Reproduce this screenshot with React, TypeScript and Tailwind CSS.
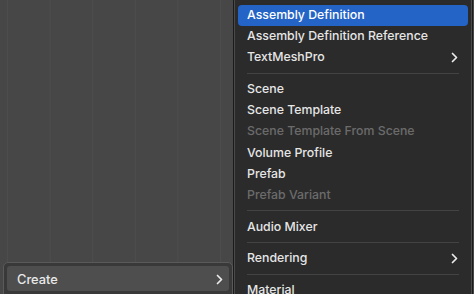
import React from "react";

type Item =
  | { kind: "item"; label: string; disabled?: boolean; active?: boolean; sub?: boolean }
  | { kind: "sep" };

const items: Item[] = [
  { kind: "item", label: "Assembly Definition", active: true },
  { kind: "item", label: "Assembly Definition Reference" },
  { kind: "item", label: "TextMeshPro", sub: true },
  { kind: "sep" },
  { kind: "item", label: "Scene" },
  { kind: "item", label: "Scene Template" },
  { kind: "item", label: "Scene Template From Scene", disabled: true },
  { kind: "item", label: "Volume Profile" },
  { kind: "item", label: "Prefab" },
  { kind: "item", label: "Prefab Variant", disabled: true },
  { kind: "sep" },
  { kind: "item", label: "Audio Mixer" },
  { kind: "sep" },
  { kind: "item", label: "Rendering", sub: true },
  { kind: "sep" },
  { kind: "item", label: "Material" },
];

function Chevron() {
  return (
    <svg width="7" height="11" viewBox="0 0 7 11" fill="none" className="shrink-0">
      <path d="M1.5 1.5 L5.5 5.5 L1.5 9.5" stroke="#ececec" strokeWidth="1.7" strokeLinecap="round" strokeLinejoin="round" />
    </svg>
  );
}

export default function App() {
  return (
    <div
      className="relative w-[474px] h-[294px] overflow-hidden bg-[#474747] bg-[linear-gradient(90deg,#4d4d4d_0px,#4d4d4d_1px,transparent_1px)] bg-[length:42.6px_100%] bg-[position:7px_0] text-[12.3px] font-medium text-[#e8e8e8]"
      style={{ fontFamily: "Inter, 'Noto Sans', sans-serif" }}
    >
      {/* Create context panel */}
      <div className="absolute left-[3px] top-[262px] w-[230px] h-[40px] rounded-[5px] border border-[#5a5a5a] bg-[#393939] p-[3px]">
        <div className="flex h-[25px] items-center justify-between rounded-[3px] bg-[#4e4e4e] pl-[10px] pr-[6px] pt-[2px]">
          <span className="text-[12.8px]">Create</span>
          <Chevron />
        </div>
      </div>

      {/* Submenu */}
      <div className="absolute left-[233px] top-[-6px] w-[240px] h-[320px] rounded-[6px] border border-[#1b1b1b] bg-[#2b2b2b] shadow-[inset_0_0_0_1px_#4a4a4a]">
        <div className="flex flex-col px-[4px] pt-[9.5px]">
          {items.map((it, i) =>
            it.kind === "sep" ? (
              <div key={i} className="flex h-[10.5px] items-center px-[9px]">
                <div className="h-px w-full bg-[#434343]" />
              </div>
            ) : (
              <div
                key={i}
                className={
                  "flex h-[21.2px] items-center justify-between rounded-[4px] pl-[9px] pr-[10px] " +
                  (it.active ? "bg-[#2464c6] text-white" : it.disabled ? "text-[#6b6b6b]" : "text-[#e6e6e6]")
                }
              >
                <span>{it.label}</span>
                {it.sub ? <Chevron /> : null}
              </div>
            )
          )}
        </div>
      </div>
    </div>
  );
}
